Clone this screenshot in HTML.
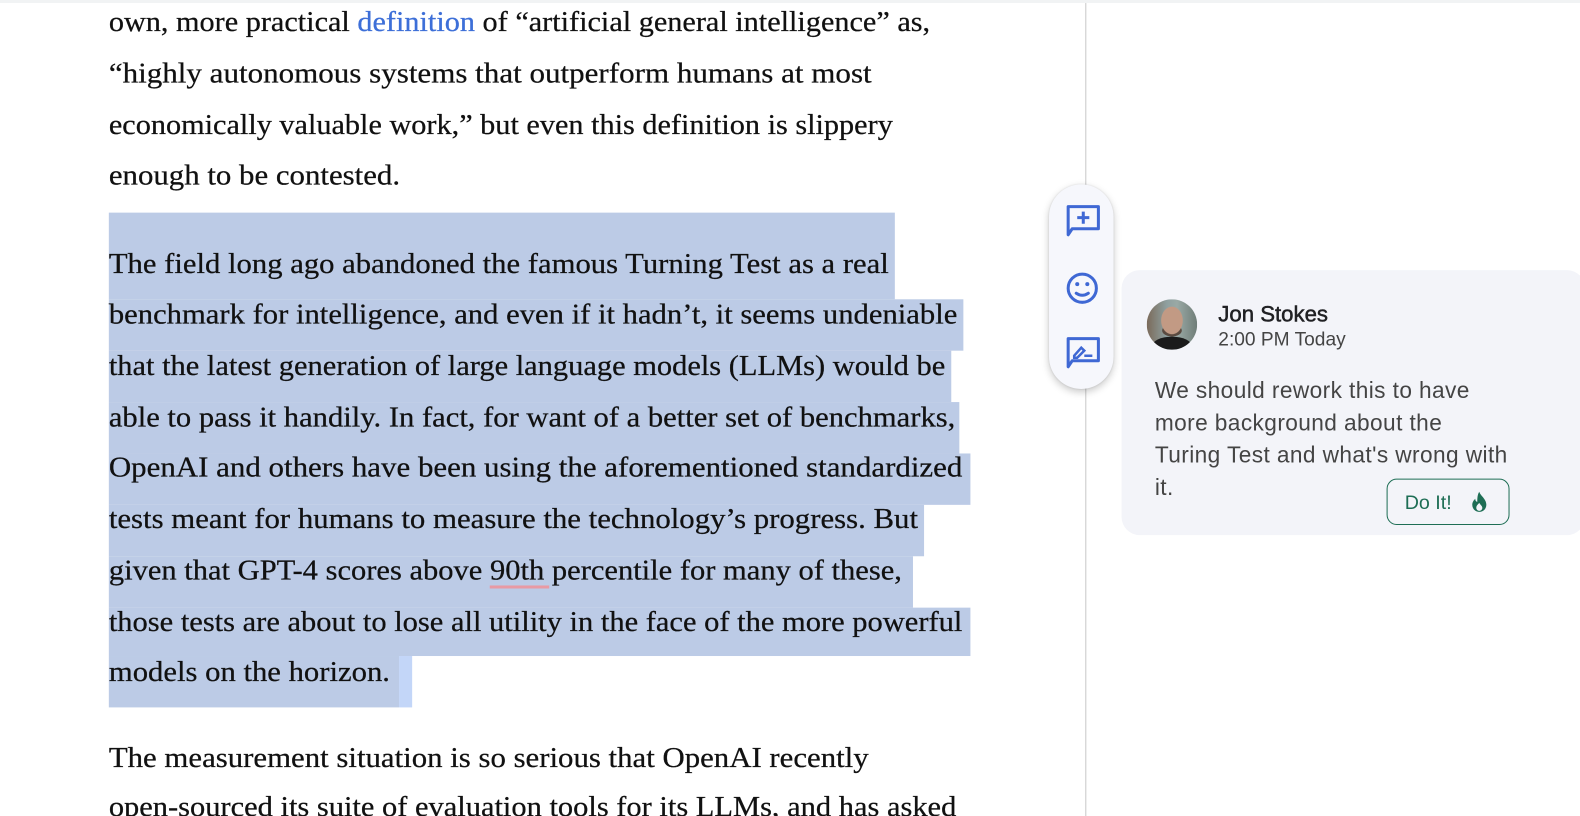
<!DOCTYPE html>
<html><head><meta charset="utf-8"><style>
html,body{margin:0;padding:0;background:#fff;width:1580px;height:816px;overflow:hidden;position:relative}
#w{position:absolute;left:0;top:0;width:1568px;height:810px;transform:scale(1.0077);transform-origin:0 0}
.top{position:absolute;left:0;top:0;width:1580px;height:3px;background:#f1f3f4}
.vline{position:absolute;left:1077px;top:3px;width:1px;height:813px;background:#c8c8c8}
.pill{position:absolute;left:1041px;top:183px;width:64px;height:203px;border-radius:32px;background:#f6f7fc;box-shadow:0 3px 8px rgba(0,0,0,.22),0 0 2px rgba(0,0,0,.12)}
.card{position:absolute;left:1113px;top:268px;width:460px;height:263px;border-radius:18px;background:#f3f4f9;font-family:"Liberation Sans",Arial,sans-serif}
.av{position:absolute;left:25px;top:29px;width:50px;height:50px;border-radius:50%;background:radial-gradient(ellipse 11px 14px at 50% 42%,#c29a84 0 95%,transparent 100%),radial-gradient(ellipse 10px 6px at 50% 62%,#5a4a40 0 95%,transparent 100%),linear-gradient(90deg,#7a6a5a,#8fa0a0 40%,#9aa9a5 60%,#6f7d78);overflow:hidden}
.av:after{content:"";position:absolute;left:5px;top:37px;width:40px;height:20px;border-radius:50% 50% 0 0;background:#1b1b1b}
.name{position:absolute;left:96px;top:31px;font-size:22px;color:#202124;-webkit-text-stroke:.5px #202124}
.time{position:absolute;left:96px;top:59px;font-size:19px;color:#444}
.body{position:absolute;left:33px;top:104px;width:420px;font-size:22.5px;letter-spacing:.4px;line-height:32px;color:#444;white-space:nowrap}
.btn{position:absolute;left:263px;top:207px;width:122px;height:46px;border:1.5px solid #1e6e55;border-radius:10px;color:#1e6e55;font-size:19.5px;box-sizing:border-box}
.btn span{position:absolute;left:17px;top:12px}
.btn svg{position:absolute;left:82px;top:11px}
</style></head><body><div id="w">
<div class="top"></div>
<svg width="1080" height="816" style="position:absolute;left:0;top:0" font-family="'Liberation Serif','DejaVu Serif',serif" font-size="28.5" fill="#111">
<g fill="#bccbe6">
<rect x="108" y="211" width="780" height="86"/>
<rect x="108" y="297" width="848" height="51"/>
<rect x="108" y="348" width="836" height="51"/>
<rect x="108" y="399" width="844" height="51"/>
<rect x="108" y="450" width="855" height="51"/>
<rect x="108" y="501" width="809" height="51"/>
<rect x="108" y="552" width="798" height="51"/>
<rect x="108" y="603" width="855" height="48"/>
<rect x="108" y="651" width="288" height="51"/>
</g>
<rect x="396" y="651" width="13" height="51" fill="#c3d6f8"/>
<g transform="translate(0,-2)" stroke="#111" stroke-width="0.25">
<text x="108" y="33" textLength="815" lengthAdjust="spacingAndGlyphs">own, more practical <tspan fill="#3d6fd8" stroke="#3d6fd8">definition</tspan> of “artificial general intelligence” as,</text>
<text x="108" y="84" textLength="757" lengthAdjust="spacingAndGlyphs">“highly autonomous systems that outperform humans at most</text>
<text x="108" y="135" textLength="778" lengthAdjust="spacingAndGlyphs">economically valuable work,” but even this definition is slippery</text>
<text x="108" y="185" textLength="289" lengthAdjust="spacingAndGlyphs">enough to be contested.</text>
<text x="108" y="273" textLength="774" lengthAdjust="spacingAndGlyphs">The field long ago abandoned the famous Turning Test as a real</text>
<text x="108" y="323" textLength="842" lengthAdjust="spacingAndGlyphs">benchmark for intelligence, and even if it hadn’t, it seems undeniable</text>
<text x="108" y="374" textLength="830" lengthAdjust="spacingAndGlyphs">that the latest generation of large language models (LLMs) would be</text>
<text x="108" y="425" textLength="840" lengthAdjust="spacingAndGlyphs">able to pass it handily. In fact, for want of a better set of benchmarks,</text>
<text x="108" y="475" textLength="847" lengthAdjust="spacingAndGlyphs">OpenAI and others have been using the aforementioned standardized</text>
<text x="108" y="526" textLength="803" lengthAdjust="spacingAndGlyphs">tests meant for humans to measure the technology’s progress. But</text>
<text x="108" y="577" textLength="787" lengthAdjust="spacingAndGlyphs">given that GPT-4 scores above 90th percentile for many of these,</text>
<text x="108" y="628" textLength="847" lengthAdjust="spacingAndGlyphs">those tests are about to lose all utility in the face of the more powerful</text>
<text x="108" y="678" textLength="279" lengthAdjust="spacingAndGlyphs">models on the horizon.</text>
<text x="108" y="763" textLength="754" lengthAdjust="spacingAndGlyphs">The measurement situation is so serious that OpenAI recently</text>
<text x="108" y="812" textLength="841" lengthAdjust="spacingAndGlyphs">open-sourced its suite of evaluation tools for its LLMs, and has asked</text>
</g>
<rect x="486" y="581" width="59" height="3" fill="#e89aa4"/>
</svg>
<div class="vline"></div>
<div class="pill">
<svg width="64" height="203" viewBox="0 0 64 203" fill="none" stroke="#3f68d4" stroke-width="3">
<path d="M19 22h30v22H23l-4 6z" stroke-linejoin="round"/>
<path d="M34 27v12M28 33h12"/>
<circle cx="33" cy="103" r="14"/>
<circle cx="28" cy="99" r="2" fill="#3f68d4" stroke="none"/>
<circle cx="38" cy="99" r="2" fill="#3f68d4" stroke="none"/>
<path d="M27 108q6 4 12 0" stroke-linecap="round"/>
<path d="M19 153h30v22H23l-4 6z" stroke-linejoin="round"/>
<path d="M25 170l7-8 3 3-7 7h-3zM35 170h8" stroke-width="2.5"/>
</svg>
</div>
<div class="card">
<div class="av"></div>
<div class="name">Jon Stokes</div>
<div class="time">2:00 PM Today</div>
<div class="body">We should rework this to have<br>more background about the<br>Turing Test and what's wrong with<br>it.</div>
<div class="btn"><span>Do It!</span><svg width="18" height="22" viewBox="0 0 18 22"><path d="M9 1c1 4 7 7 7 13a7 7 0 0 1-14 0c0-3 2-5 3-6 0 2 1 3 2 3C7 8 7 4 9 1z" fill="#1e6e55"/><path d="M9 12c-2 2-3 3-3 5a3 3 0 0 0 6 0c0-2-2-3-3-5z" fill="#f3f4f9"/></svg></div>
</div>
</div></body></html>
